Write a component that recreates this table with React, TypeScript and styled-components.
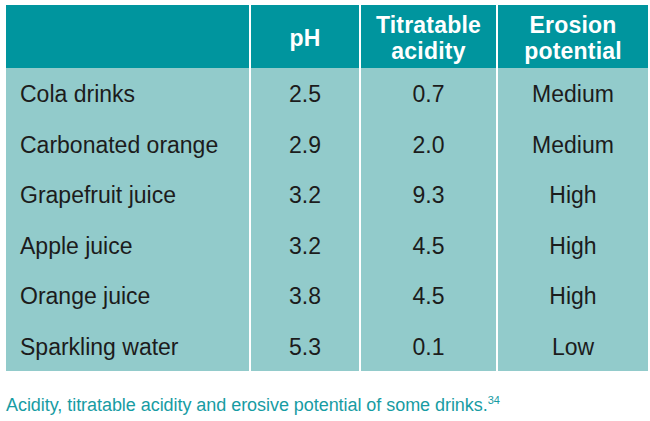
import React from 'react'
import styled, { createGlobalStyle } from 'styled-components'

const GlobalStyle = createGlobalStyle`
  html, body {
    margin: 0;
    padding: 0;
    background: #fff;
  }
`

const Page = styled.div`
  width: 650px;
  height: 421px;
  padding: 5px 2px 0 6px;
  box-sizing: border-box;
  font-family: 'Liberation Sans', Arial, sans-serif;
`

const Grid = styled.div`
  display: grid;
  grid-template-columns: 243px 108px 135px 150px;
  grid-template-rows: 63px repeat(6, 50.5px);
  column-gap: 2px;
`

const HeadCell = styled.div`
  background: #00959e;
  color: #fff;
  font-weight: bold;
  font-size: 23px;
  line-height: 26px;
  letter-spacing: 0.2px;
  display: flex;
  align-items: center;
  justify-content: center;
  text-align: center;
  padding-top: 2px;
`

const Cell = styled.div<{ $left?: boolean }>`
  background: #92cbcb;
  color: #1c1c1c;
  font-size: 23px;
  display: flex;
  align-items: center;
  justify-content: ${({ $left }) => ($left ? 'flex-start' : 'center')};
  padding-left: ${({ $left }) => ($left ? '14px' : '0')};
  padding-top: 3px;
`

const Caption = styled.p`
  margin: 24px 0 0;
  color: #179ca3;
  font-size: 18px;
  letter-spacing: -0.05px;

  sup {
    font-size: 11px;
    vertical-align: 7px;
    line-height: 0;
  }
`

const rows = [
  ['Cola drinks', '2.5', '0.7', 'Medium'],
  ['Carbonated orange', '2.9', '2.0', 'Medium'],
  ['Grapefruit juice', '3.2', '9.3', 'High'],
  ['Apple juice', '3.2', '4.5', 'High'],
  ['Orange juice', '3.8', '4.5', 'High'],
  ['Sparkling water', '5.3', '0.1', 'Low']
]

export default function App() {
  return (
    <Page>
      <GlobalStyle />
      <Grid>
        <HeadCell />
        <HeadCell>pH</HeadCell>
        <HeadCell>
          Titratable
          <br />
          acidity
        </HeadCell>
        <HeadCell>
          Erosion
          <br />
          potential
        </HeadCell>
        {rows.map((r) =>
          r.map((v, i) => (
            <Cell key={r[0] + i} $left={i === 0}>
              {v}
            </Cell>
          ))
        )}
      </Grid>
      <Caption>
        Acidity, titratable acidity and erosive potential of some drinks.<sup>34</sup>
      </Caption>
    </Page>
  )
}
